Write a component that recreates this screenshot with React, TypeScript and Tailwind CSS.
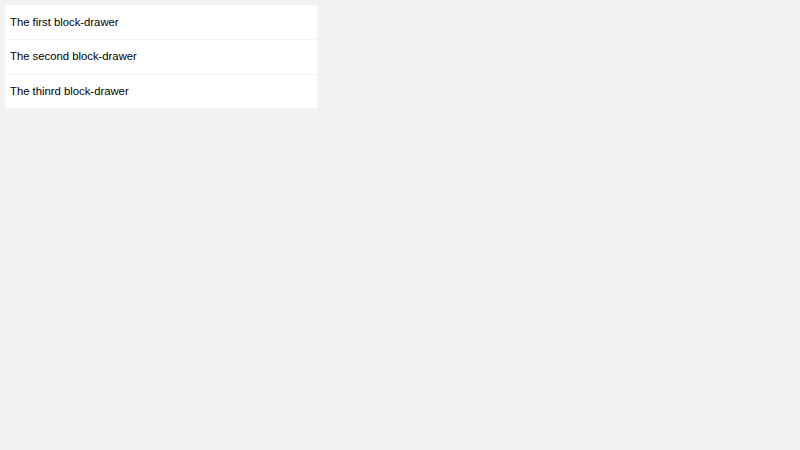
const items = [
  "The first block-drawer",
  "The second block-drawer",
  "The thinrd block-drawer",
];

export default function App() {
  return (
    <div className="min-h-screen bg-[#f2f2f2] p-[5px] font-['Liberation_Sans',Arial,sans-serif] text-[11.3px] text-black">
      <div className="w-[312px] bg-white">
        {items.map((label, i) => (
          <div
            key={label}
            className={
              i > 0
                ? "flex h-[34.5px] items-center border-t border-[#f4f4f4] px-[5px]"
                : "flex h-[34px] items-center px-[5px]"
            }
          >
            {label}
          </div>
        ))}
      </div>
    </div>
  );
}
